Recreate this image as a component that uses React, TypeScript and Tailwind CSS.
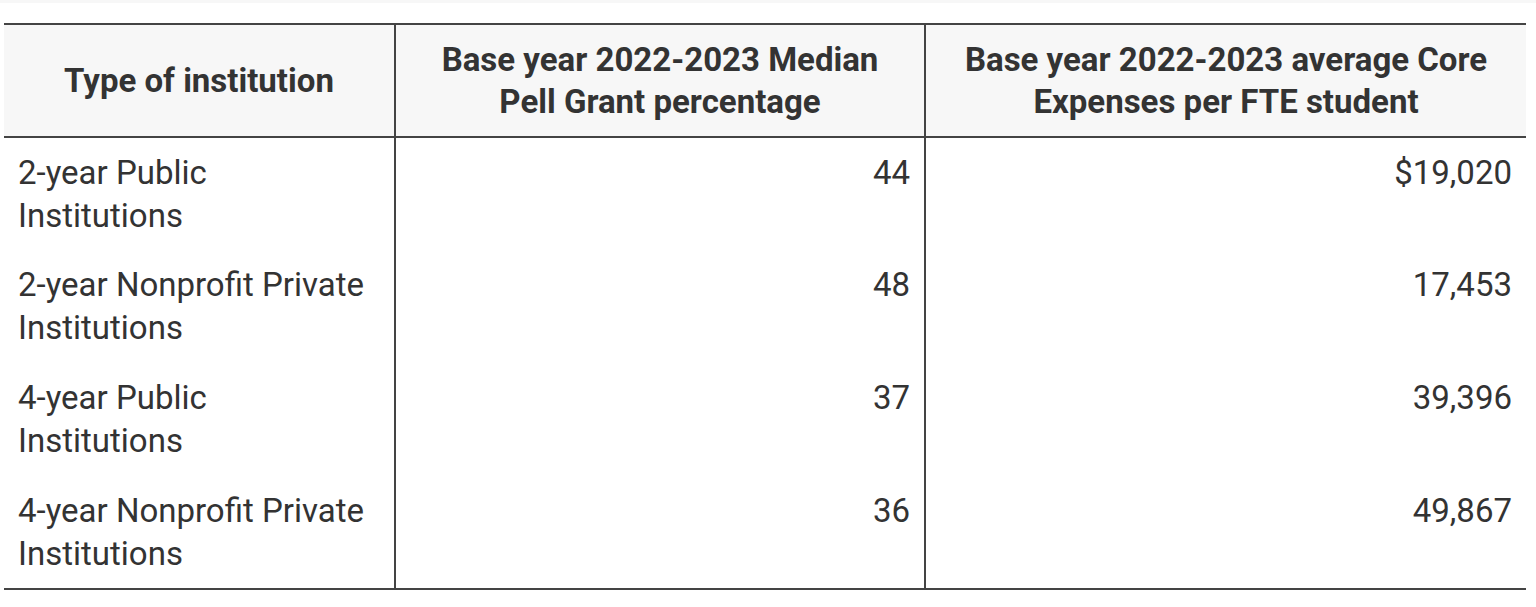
const rows = [
  { type: ['2-year Public', 'Institutions'], pell: '44', core: '$19,020' },
  { type: ['2-year Nonprofit Private', 'Institutions'], pell: '48', core: '17,453' },
  { type: ['4-year Public', 'Institutions'], pell: '37', core: '39,396' },
  { type: ['4-year Nonprofit Private', 'Institutions'], pell: '36', core: '49,867' },
]

export default function App() {
  return (
    <div className="min-h-screen bg-white font-['Roboto',sans-serif] text-[#333]">
      <div className="h-[3px] bg-[#f7f7f7]" />
      <div className="pl-[4px] pr-[10px] pt-[20px]">
        <table className="w-full border-collapse">
          <thead>
            <tr className="bg-[#f7f7f7] border-t-2 border-b-2 border-[#444]">
              <th className="w-[391px] border-r-2 border-[#444] px-[14px] h-[113px] text-[33px] leading-[42px] font-bold text-center align-middle">
                Type of institution
              </th>
              <th className="w-[530px] border-r-2 border-[#444] px-[14px] text-[33px] leading-[42px] font-bold text-center align-middle">
                Base year 2022-2023 Median
                <br />
                Pell Grant percentage
              </th>
              <th className="px-[14px] text-[33px] leading-[42px] font-bold text-center align-middle">
                Base year 2022-2023 average Core
                <br />
                Expenses per FTE student
              </th>
            </tr>
          </thead>
          <tbody className="border-b-2 border-[#444]">
            {rows.map((r) => (
              <tr key={r.type[0]}>
                <td className="border-r-2 border-[#444] px-[14px] pt-[13px] pb-[13px] h-[113px] align-top text-[33px] leading-[43px]">
                  {r.type[0]}
                  <br />
                  {r.type[1]}
                </td>
                <td className="border-r-2 border-[#444] px-[14px] pt-[13px] align-top text-right text-[33px] leading-[43px]">
                  {r.pell}
                </td>
                <td className="px-[14px] pt-[13px] align-top text-right text-[33px] leading-[43px]">
                  {r.core}
                </td>
              </tr>
            ))}
          </tbody>
        </table>
      </div>
    </div>
  )
}
